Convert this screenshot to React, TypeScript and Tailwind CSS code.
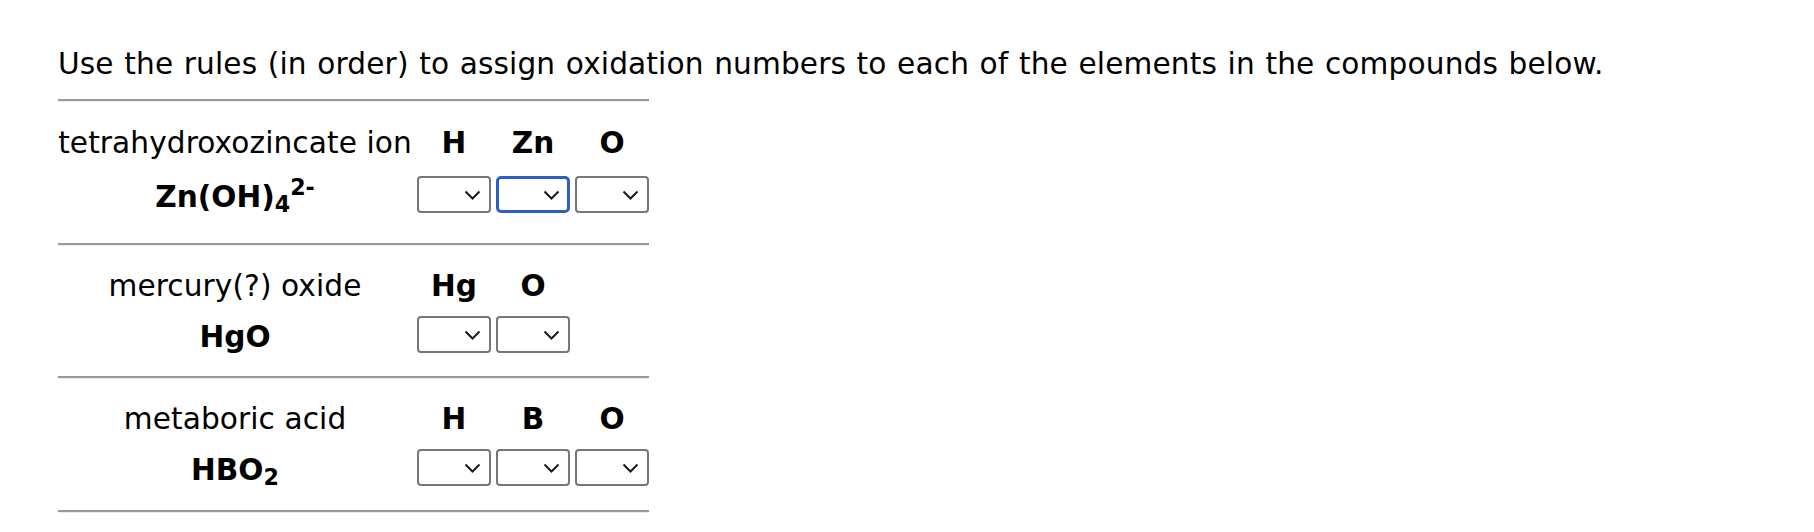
import React from 'react';

type Compound = {
  name: string;
  formula: React.ReactNode;
  elements: string[];
  focused?: number;
  top: string;
  gap: string;
  bottom: string;
};

const compounds: Compound[] = [
  {
    name: 'tetrahydroxozincate ion',
    formula: (
      <>
        Zn(OH)<sub>4</sub>
        <sup>2-</sup>
      </>
    ),
    elements: ['H', 'Zn', 'O'],
    focused: 1,
    top: 'pt-[23px]',
    gap: 'gap-y-[15px]',
    bottom: 'pb-[30px]',
  },
  {
    name: 'mercury(?) oxide',
    formula: <>HgO</>,
    elements: ['Hg', 'O'],
    top: 'pt-[22px]',
    gap: 'gap-y-[12px]',
    bottom: 'pb-[23px]',
  },
  {
    name: 'metaboric acid',
    formula: (
      <>
        HBO<sub>2</sub>
      </>
    ),
    elements: ['H', 'B', 'O'],
    top: 'pt-[22px]',
    gap: 'gap-y-[12px]',
    bottom: 'pb-[24px]',
  },
];

function Divider() {
  return <div className="h-[3px] w-[591px] border-t-2 border-b border-t-[#999999] border-b-[#ececec]" />;
}

function Dropdown({ focused }: { focused?: boolean }) {
  return (
    <div
      className={
        focused
          ? 'flex h-[37px] w-[74px] items-center justify-end rounded-[5px] border-[3px] border-[#2a5fc6] bg-white pr-[7px]'
          : 'flex h-[37px] w-[74px] items-center justify-end rounded-[4px] border-2 border-[#777777] bg-white pr-[8px]'
      }
    >
      <svg width="17" height="10" viewBox="0 0 17 10" fill="none">
        <polyline points="1.5,1.5 8.5,8.5 15.5,1.5" stroke="#1a1a1a" strokeWidth="2" />
      </svg>
    </div>
  );
}

export default function App() {
  return (
    <div className="min-h-[532px] bg-white pl-[58px] pt-[46px] text-[29.6px] text-black [font-family:'DejaVu_Sans',Verdana,sans-serif]">
      <p className="whitespace-nowrap leading-[36px] tracking-[0.14px] [word-spacing:1px]">
        Use the rules (in order) to assign oxidation numbers to each of the elements in the compounds below.
      </p>
      <div className="mt-[17px]">
        <Divider />
      </div>
      {compounds.map((c) => (
        <div key={c.name}>
          <div className={`grid w-[591px] grid-cols-[354px_74px_74px_74px] gap-x-[5px] ${c.gap} ${c.top} ${c.bottom}`}>
            <div className="whitespace-nowrap text-center leading-[36px] tracking-[0.1px]">{c.name}</div>
            {c.elements.map((el) => (
              <div key={el} className="text-center font-bold leading-[36px]">
                {el}
              </div>
            ))}
            {c.elements.length < 3 && <div />}
            <div className="flex items-center justify-center whitespace-nowrap font-bold leading-[36px]">
              <span className="translate-y-[2px]">{c.formula}</span>
            </div>
            {c.elements.map((el, i) => (
              <Dropdown key={el} focused={c.focused === i} />
            ))}
          </div>
          <Divider />
        </div>
      ))}
    </div>
  );
}
